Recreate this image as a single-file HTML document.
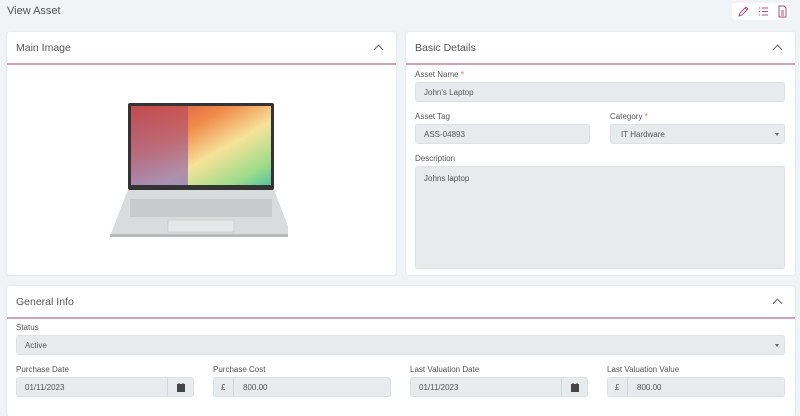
<!DOCTYPE html>
<html><head><style>
*{box-sizing:border-box;margin:0;padding:0}
body{width:800px;height:407px;overflow:hidden;background:#f1f4f7;font-family:"Liberation Sans",sans-serif;color:#555;position:relative}
.a{position:absolute}
.card{position:absolute;background:#fff;border-radius:3px;box-shadow:0 0 3px rgba(0,0,0,.08)}
.hd{position:absolute;left:0;right:0;top:0;height:33px;border-bottom:2px solid #cfa3b8;font-size:10.5px;color:#555;padding:10px 0 0 9px}
.chev{position:absolute;right:14px;width:7px;height:7px;border-left:1.3px solid #666;border-top:1.3px solid #666;transform:rotate(45deg);top:14px}
.lbl{position:absolute;font-size:8px;color:#555}
.lbl b{color:#e06a5a;font-weight:normal}
.in{position:absolute;background:#e8ebee;border:1px solid #dde1e5;border-radius:3px;font-size:8px;color:#555;padding:5px 0 0 8px;height:20px}
.caret{position:absolute;right:5px;top:8px;border:2.5px solid transparent;border-top:3px solid #666}
.add{position:absolute;top:0;bottom:0;width:26px;border-left:1px solid #d3d7db}
</style></head><body>
<div class="a" style="left:7px;top:5px;font-size:11px;color:#555">View Asset</div>
<div class="a" style="left:732px;top:3px;width:57px;height:17px;background:#fff;border-radius:3px">
<svg width="57" height="17" viewBox="0 0 57 17" fill="none" stroke="#b0527e" stroke-width="1">
<path d="M7 13l1-3 6-6 2 2-6 6z M13 5l2 2"/>
<path d="M27 5h1M27 8.5h1M27 12h1M30 5h6M30 8.5h6M30 12h6"/>
<path d="M47 3h5l2 2v9h-7z M49 8h3M49 10h3M49 12h3"/>
</svg></div>

<div class="card" style="left:7px;top:32px;width:389px;height:243px">
<div class="hd">Main Image<span class="chev"></span></div>
<svg class="a" style="left:96px;top:38px" width="185" height="170" viewBox="103 70 185 170">
<defs><linearGradient id="g" x1="0" y1="0" x2="1" y2="1"><stop offset="0" stop-color="#c9484a"/><stop offset=".35" stop-color="#f08a4a"/><stop offset=".6" stop-color="#f6e39a"/><stop offset=".85" stop-color="#9fdc8a"/><stop offset="1" stop-color="#57c3a0"/></linearGradient>
<linearGradient id="l" x1="0" y1="0" x2="0" y2="1"><stop offset="0" stop-color="#c04a55"/><stop offset="1" stop-color="#8a70c0"/></linearGradient></defs>
<rect x="128" y="103" width="146" height="87" rx="2" fill="#333"/>
<rect x="131" y="106" width="140" height="79" fill="url(#g)"/>
<rect x="131" y="106" width="57" height="79" fill="url(#l)" opacity=".7"/>
<path d="M110 236 L128 190 H274 L292 236 Z" fill="#d9dcdc"/>
<rect x="130" y="199" width="142" height="18" fill="#c8cbcc"/>
<rect x="168" y="220" width="66" height="12" fill="#e6e8e8" stroke="#bbb" stroke-width=".5"/>
<rect x="110" y="234" width="182" height="3" fill="#b8bbbb"/>
</svg>
</div>

<div class="card" style="left:406px;top:32px;width:389px;height:243px">
<div class="hd">Basic Details<span class="chev"></span></div>
<div class="lbl" style="left:9px;top:38px">Asset Name <b>*</b></div>
<div class="in" style="left:9px;top:50px;width:370px">John's Laptop</div>
<div class="lbl" style="left:9px;top:80px">Asset Tag</div>
<div class="in" style="left:9px;top:92px;width:175px">ASS-04893</div>
<div class="lbl" style="left:204px;top:80px">Category <b>*</b></div>
<div class="in" style="left:204px;top:92px;width:175px;padding-left:10px">IT Hardware<span class="caret"></span></div>
<div class="lbl" style="left:9px;top:122px">Description</div>
<div class="in" style="left:9px;top:134px;width:370px;height:103px;padding-top:7px">Johns laptop</div>
</div>

<div class="card" style="left:7px;top:286px;width:788px;height:130px">
<div class="hd">General Info<span class="chev"></span></div>
<div class="lbl" style="left:9px;top:37px">Status</div>
<div class="in" style="left:9px;top:49px;width:769px">Active<span class="caret"></span></div>
<div class="lbl" style="left:9px;top:79px">Purchase Date</div>
<div class="in" style="left:9px;top:91px;width:178px">01/11/2023<span class="add" style="right:0"><svg class="a" style="left:9px;top:5px" width="8" height="9"><rect x="0" y="1" width="8" height="8" fill="#444"/><rect x="1.5" y="0" width="1" height="2" fill="#444"/><rect x="5.5" y="0" width="1" height="2" fill="#444"/></svg></span></div>
<div class="lbl" style="left:206px;top:79px">Purchase Cost</div>
<div class="in" style="left:206px;top:91px;width:178px;padding-left:29px"><span class="add" style="left:0;border-left:0;border-right:1px solid #d3d7db;padding:5px 0 0 7px;width:20px">£</span>800.00</div>
<div class="lbl" style="left:403px;top:79px">Last Valuation Date</div>
<div class="in" style="left:403px;top:91px;width:178px">01/11/2023<span class="add" style="right:0"><svg class="a" style="left:9px;top:5px" width="8" height="9"><rect x="0" y="1" width="8" height="8" fill="#444"/><rect x="1.5" y="0" width="1" height="2" fill="#444"/><rect x="5.5" y="0" width="1" height="2" fill="#444"/></svg></span></div>
<div class="lbl" style="left:600px;top:79px">Last Valuation Value</div>
<div class="in" style="left:600px;top:91px;width:178px;padding-left:29px"><span class="add" style="left:0;border-left:0;border-right:1px solid #d3d7db;padding:5px 0 0 7px;width:20px">£</span>800.00</div>
</div>
</body></html>
